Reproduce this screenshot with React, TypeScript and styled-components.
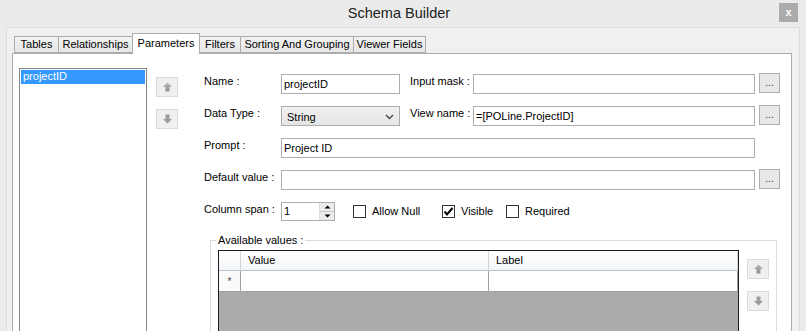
import React from 'react';
import styled, { createGlobalStyle } from 'styled-components';

const GlobalStyle = createGlobalStyle`
  html, body {
    margin: 0;
    padding: 0;
    background: #ebebeb;
  }
  body {
    font-family: "Liberation Sans", Arial, sans-serif;
    font-size: 11px;
    color: #000;
  }
`;

const Window = styled.div`
  display: flex;
  flex-direction: column;
  width: 806px;
  height: 331px;
  overflow: hidden;
  background: #ebebeb;
`;

const TitleBar = styled.div`
  display: grid;
  grid-template-columns: 1fr auto 1fr;
  align-items: center;
  height: 27px;
  padding-right: 8px;
  flex: 0 0 auto;
`;

const Title = styled.div`
  grid-column: 2;
  font-size: 14.5px;
  color: #222;
  padding-bottom: 1px;
`;

const CloseButton = styled.div`
  grid-column: 3;
  justify-self: end;
  align-self: start;
  margin-top: 3px;
  width: 19px;
  height: 19px;
  background: #ababab;
  color: #fff;
  font-weight: bold;
  font-size: 11px;
  display: flex;
  align-items: center;
  justify-content: center;
  line-height: 1;
`;

const OuterPane = styled.div`
  flex: 1 1 auto;
  display: flex;
  flex-direction: column;
  margin: 0 6px 0 6px;
  border: 1px solid #dcdcdc;
  border-bottom: none;
  background: #f0f0f0;
  padding: 5px 7px 0 5px;
  min-height: 0;
`;

const TabStrip = styled.div`
  display: flex;
  align-items: flex-end;
  height: 20px;
  padding-left: 2px;
  position: relative;
  z-index: 1;
`;

const Tab = styled.div<{ $w: number; $active?: boolean }>`
  box-sizing: border-box;
  width: ${p => p.$w}px;
  height: ${p => (p.$active ? 21 : 17)}px;
  margin-left: -1px;
  margin-bottom: ${p => (p.$active ? -1 : 0)}px;
  border: 1px solid #acacac;
  border-bottom: ${p => (p.$active ? 'none' : '1px solid #acacac')};
  background: ${p => (p.$active ? '#fff' : 'linear-gradient(#f3f3f3, #e6e6e6)')};
  display: flex;
  justify-content: center;
  padding-top: ${p => (p.$active ? 3 : 1)}px;
  white-space: nowrap;
  position: relative;
  z-index: ${p => (p.$active ? 2 : 1)};
  &:first-child {
    margin-left: 0;
  }
`;

const Panel = styled.div`
  flex: 1 1 auto;
  background: #fff;
  border: 1px solid #acacac;
  border-bottom: none;
  display: flex;
  align-items: flex-start;
  padding: 14px 0 0 6px;
  min-height: 0;
`;

const ListBox = styled.div`
  box-sizing: border-box;
  width: 128px;
  height: 300px;
  border: 1px solid #828790;
  padding: 1px;
  flex: 0 0 auto;
`;

const ListItem = styled.div<{ $selected?: boolean }>`
  height: 14px;
  line-height: 13px;
  padding-left: 2px;
  background: ${p => (p.$selected ? '#3399ff' : 'transparent')};
  color: ${p => (p.$selected ? '#fff' : '#000')};
`;

const ArrowColumn = styled.div<{ $top: number; $left: number }>`
  display: flex;
  flex-direction: column;
  gap: 12px;
  margin-top: ${p => p.$top}px;
  margin-left: ${p => p.$left}px;
  flex: 0 0 auto;
`;

const ArrowButton = styled.div`
  box-sizing: border-box;
  width: 22px;
  height: 20px;
  border: 1px solid #dadada;
  background: #f0f0f0;
  display: flex;
  align-items: center;
  justify-content: center;
`;

const Form = styled.div`
  margin-left: 26px;
  margin-top: 6px;
  width: 576px;
  display: flex;
  flex-direction: column;
`;

const FieldGrid = styled.div`
  display: grid;
  grid-template-columns: 77px 119px 73px 282px 25px;
  grid-template-rows: 20px 20px 20px 20px 18px;
  row-gap: 12px;
`;

const Label = styled.div<{ $indent?: number }>`
  padding-top: 1px;
  padding-left: ${p => p.$indent ?? 0}px;
  white-space: nowrap;
`;

const TextBox = styled.div<{ $span?: string }>`
  box-sizing: border-box;
  grid-column: ${p => p.$span ?? 'auto'};
  height: 20px;
  border: 1px solid #abadb3;
  background: #fff;
  padding: 3px 0 0 2px;
  white-space: nowrap;
  overflow: hidden;
`;

const Select = styled.div`
  box-sizing: border-box;
  height: 20px;
  border: 1px solid #acacac;
  background: linear-gradient(#f0f0f0, #e5e5e5);
  display: flex;
  align-items: center;
  justify-content: space-between;
  padding: 1px 5px 0 5px;
`;

const EllipsisButton = styled.div`
  box-sizing: border-box;
  justify-self: end;
  margin-top: -1px;
  width: 21px;
  height: 20px;
  border: 1px solid #adadad;
  background: #e8e8e8;
  display: flex;
  align-items: flex-end;
  justify-content: center;
  font-size: 10px;
  padding-bottom: 4px;
  color: #333;
`;

const OptionsRow = styled.div`
  grid-column: 2 / 6;
  display: flex;
  align-items: center;
`;

const Spinner = styled.div`
  box-sizing: border-box;
  width: 54px;
  height: 19px;
  margin-right: 18px;
  border: 1px solid #abadb3;
  display: flex;
  align-items: stretch;
`;

const SpinnerText = styled.div`
  flex: 1;
  padding: 2px 0 0 2px;
`;

const SpinnerButtons = styled.div`
  width: 14px;
  display: flex;
  flex-direction: column;
  border-left: 1px solid #dcdcdc;
`;

const SpinnerHalf = styled.div`
  flex: 1;
  display: flex;
  align-items: center;
  justify-content: center;
  background: #ececec;
  & + & {
    border-top: 1px solid #c8c8c8;
  }
`;

const CheckOption = styled.div<{ $w: number }>`
  display: flex;
  align-items: center;
  width: ${p => p.$w}px;
  gap: 6px;
  white-space: nowrap;
`;

const CheckBox = styled.div`
  box-sizing: border-box;
  width: 13px;
  height: 13px;
  border: 1px solid #333;
  background: #fff;
  display: flex;
  align-items: center;
  justify-content: center;
`;

const GroupBox = styled.fieldset`
  margin: 13px 0 0 6px;
  width: 567px;
  box-sizing: border-box;
  border: 1px solid #dcdcdc;
  border-bottom: none;
  padding: 3px 7px 0 7px;
  display: flex;
  align-items: flex-start;
  min-inline-size: 0;
`;

const Legend = styled.legend`
  margin-left: -2px;
  padding: 0 2px;
  line-height: 14px;
`;

const DataGrid = styled.div`
  box-sizing: border-box;
  width: 521px;
  height: 140px;
  border: 1px solid #1e1e1e;
  background: #ababab;
  display: grid;
  grid-template-columns: 22px 248px 1fr;
  grid-template-rows: 20px 21px;
  align-content: start;
`;

const HeaderCell = styled.div`
  box-sizing: border-box;
  background: linear-gradient(#ffffff, #f3f5f8);
  border-right: 1px solid #d5d5d5;
  border-bottom: 1px solid #b8c3cf;
  padding: 3px 0 0 7px;
  &:last-of-type {
    border-right: none;
  }
`;

const RowHeader = styled.div`
  box-sizing: border-box;
  background: #fafafa;
  border-right: 1px solid #a0a0a0;
  border-bottom: 1px solid #a0a0a0;
  display: flex;
  align-items: center;
  justify-content: center;
  color: #444;
  font-size: 10px;
`;

const DataCell = styled.div`
  box-sizing: border-box;
  background: #fff;
  border-right: 1px solid #a0a0a0;
  border-bottom: 1px solid #a0a0a0;
`;

const UpArrow = () => (
  <svg width="9" height="10" viewBox="0 0 9 10">
    <defs>
      <linearGradient id="ag" x1="0" y1="0" x2="0" y2="1">
        <stop offset="0" stopColor="#b8b8b8" />
        <stop offset="1" stopColor="#8e8e8e" />
      </linearGradient>
    </defs>
    <polygon points="4.5,0.5 9,5 6.5,5 6.5,9.5 2.5,9.5 2.5,5 0,5" fill="url(#ag)" />
  </svg>
);

const DownArrow = () => (
  <svg width="9" height="10" viewBox="0 0 9 10">
    <polygon points="4.5,9.5 9,5 6.5,5 6.5,0.5 2.5,0.5 2.5,5 0,5" fill="#9c9c9c" />
  </svg>
);

const Chevron = () => (
  <svg width="9" height="6" viewBox="0 0 9 6">
    <polyline points="1,1 4.5,4.5 8,1" fill="none" stroke="#444" strokeWidth="1.4" />
  </svg>
);

const Tick = () => (
  <svg width="11" height="11" viewBox="0 0 11 11">
    <polyline points="1.5,5.5 4,8.5 9.5,2" fill="none" stroke="#000" strokeWidth="2" />
  </svg>
);

const SpinTriangle = ({ up }: { up?: boolean }) => (
  <svg width="7" height="4" viewBox="0 0 7 4">
    <polygon points={up ? '0.5,3.5 3.5,0.5 6.5,3.5' : '0.5,0.5 3.5,3.5 6.5,0.5'} fill="#000" />
  </svg>
);

const tabs = [
  { label: 'Tables', w: 45 },
  { label: 'Relationships', w: 75 },
  { label: 'Parameters', w: 68, active: true },
  { label: 'Filters', w: 42 },
  { label: 'Sorting And Grouping', w: 114 },
  { label: 'Viewer Fields', w: 73 },
];

const App = () => {
  return (
    <>
      <GlobalStyle />
      <Window>
        <TitleBar>
          <Title>Schema Builder</Title>
          <CloseButton>x</CloseButton>
        </TitleBar>
        <OuterPane>
          <TabStrip>
            {tabs.map(t => (
              <Tab key={t.label} $w={t.w} $active={t.active}>
                {t.label}
              </Tab>
            ))}
          </TabStrip>
          <Panel>
            <ListBox>
              <ListItem $selected>projectID</ListItem>
            </ListBox>
            <ArrowColumn $top={9} $left={9}>
              <ArrowButton><UpArrow /></ArrowButton>
              <ArrowButton><DownArrow /></ArrowButton>
            </ArrowColumn>
            <Form>
              <FieldGrid>
                <Label>Name :</Label>
                <TextBox>projectID</TextBox>
                <Label $indent={10}>Input mask :</Label>
                <TextBox />
                <EllipsisButton>...</EllipsisButton>

                <Label>Data Type :</Label>
                <Select>
                  <span>String</span>
                  <Chevron />
                </Select>
                <Label $indent={10}>View name :</Label>
                <TextBox>=[POLine.ProjectID]</TextBox>
                <EllipsisButton>...</EllipsisButton>

                <Label>Prompt :</Label>
                <TextBox $span="2 / 5">Project ID</TextBox>
                <div />

                <Label>Default value :</Label>
                <TextBox $span="2 / 5" />
                <EllipsisButton>...</EllipsisButton>

                <Label>Column span :</Label>
                <OptionsRow>
                  <Spinner>
                    <SpinnerText>1</SpinnerText>
                    <SpinnerButtons>
                      <SpinnerHalf><SpinTriangle up /></SpinnerHalf>
                      <SpinnerHalf><SpinTriangle /></SpinnerHalf>
                    </SpinnerButtons>
                  </Spinner>
                  <CheckOption $w={89}>
                    <CheckBox />
                    <span>Allow Null</span>
                  </CheckOption>
                  <CheckOption $w={64}>
                    <CheckBox><Tick /></CheckBox>
                    <span>Visible</span>
                  </CheckOption>
                  <CheckOption $w={80}>
                    <CheckBox />
                    <span>Required</span>
                  </CheckOption>
                </OptionsRow>
              </FieldGrid>
              <GroupBox>
                <Legend>Available values :</Legend>
                <DataGrid>
                  <HeaderCell />
                  <HeaderCell>Value</HeaderCell>
                  <HeaderCell>Label</HeaderCell>
                  <RowHeader>*</RowHeader>
                  <DataCell />
                  <DataCell />
                </DataGrid>
                <ArrowColumn $top={9} $left={8}>
                  <ArrowButton><UpArrow /></ArrowButton>
                  <ArrowButton><DownArrow /></ArrowButton>
                </ArrowColumn>
              </GroupBox>
            </Form>
          </Panel>
        </OuterPane>
      </Window>
    </>
  );
};

export default App;
